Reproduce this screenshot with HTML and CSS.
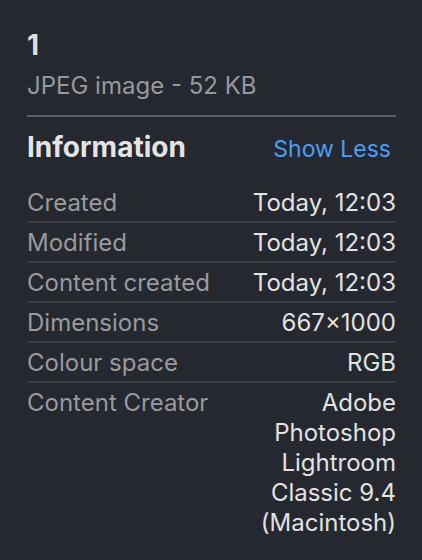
FILE: index.html
```html
<!DOCTYPE html>
<html lang="en">
<head>
<meta charset="utf-8">
<title>Info</title>
<link rel="stylesheet" href="styles.css">
</head>
<body>
<div class="panel">
  <h1 class="title">1</h1>
  <p class="subtitle">JPEG image - 52 KB</p>
  <div class="section-head">
    <h2 class="section-title">Information</h2>
    <a class="toggle" href="#">Show Less</a>
  </div>
  <dl class="info">
    <div class="row"><dt>Created</dt><dd>Today, 12:03</dd></div>
    <div class="row"><dt>Modified</dt><dd>Today, 12:03</dd></div>
    <div class="row"><dt>Content created</dt><dd>Today, 12:03</dd></div>
    <div class="row"><dt>Dimensions</dt><dd>667×1000</dd></div>
    <div class="row"><dt>Colour space</dt><dd>RGB</dd></div>
    <div class="row row-wrap"><dt>Content Creator</dt><dd>Adobe Photoshop Lightroom Classic 9.4 (Macintosh)</dd></div>
  </dl>
</div>
</body>
</html>
```

FILE: styles.css
```css
html, body {
  margin: 0;
  padding: 0;
  background: #25282e;
  height: 100%;
}
body {
  font-family: Inter, "Noto Sans", "Liberation Sans", sans-serif;
  -webkit-font-smoothing: antialiased;
}
.panel {
  padding: 28px 26px 0 27px;
}
.title {
  margin: 0;
  font-size: 28px;
  line-height: 34px;
  font-weight: 700;
  color: #dedfe0;
}
.subtitle {
  margin: 9px 0 0;
  padding-bottom: 14px;
  border-bottom: 2px solid #5d5f64;
  font-size: 24px;
  line-height: 30px;
  color: #97989c;
}
.section-head {
  display: flex;
  justify-content: space-between;
  align-items: baseline;
  padding: 13px 5px 0 0;
  margin-bottom: 17px;
}
.section-title {
  margin: 0;
  font-size: 28px;
  line-height: 34px;
  font-weight: 700;
  color: #e4e4e5;
}
.toggle {
  font-size: 23px;
  line-height: 34px;
  color: #4a9ef5;
  text-decoration: none;
}
.info {
  margin: 0;
}
.row {
  display: flex;
  justify-content: space-between;
  align-items: flex-start;
  padding: 5px 0 3px;
  border-bottom: 2px solid #393c41;
  font-size: 24px;
  line-height: 30px;
}
.row dt {
  color: #999a9e;
}
.row dd {
  margin: 0;
  color: #e2e2e3;
  text-align: right;
}
.row-wrap {
  border-bottom: none;
}
.row-wrap dd {
  width: 140px;
}
```
